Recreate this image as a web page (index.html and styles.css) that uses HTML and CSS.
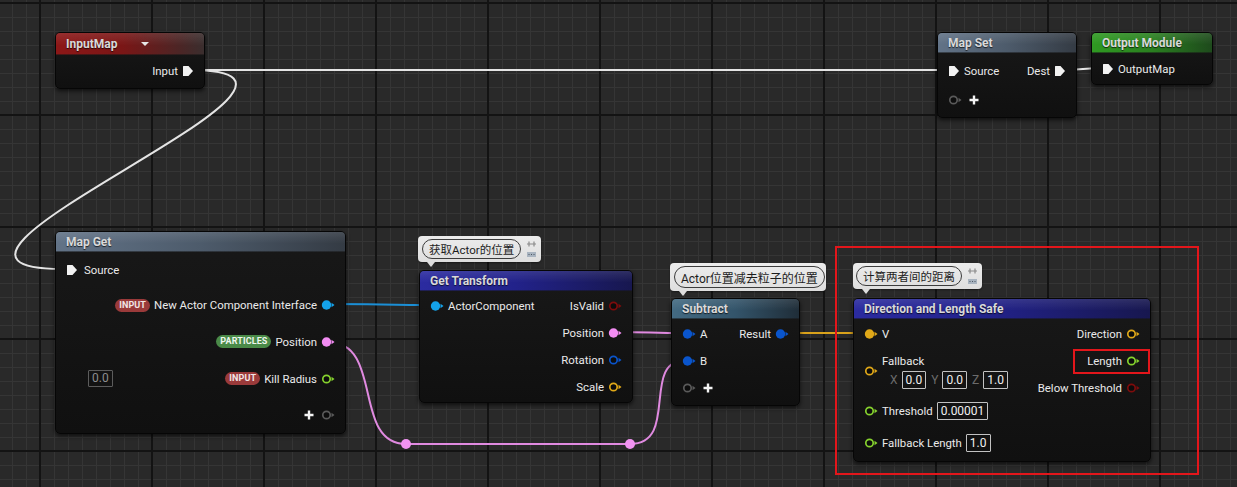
FILE: index.html
```html
<!DOCTYPE html>
<html>
<head>
<meta charset="utf-8">
<link rel="stylesheet" href="styles.css">
</head>
<body>
<div class="canvas">
  <svg class="wires" width="1237" height="487" viewBox="0 0 1237 487">
    <g fill="none" stroke-width="2" stroke-linecap="round">
      <path d="M190 70 L946 70" stroke="#e4e4e4"/>
      <path d="M190 70 C390 70 -140 269 62 269" stroke="#e4e4e4"/>
      <path d="M1062 70 C1082 70 1084 68 1104 68" stroke="#e4e4e4"/>
      <path d="M328 304 C378 304 385 305 437 305" stroke="#1b8fd6"/>
      <path d="M328 342 C384 342 352 444 406 444 L630 444 C680 444 640 360 686 360" stroke="#e08ae0"/>
      <path d="M614 332 C650 332 650 333 686 333" stroke="#e08ae0"/>
      <path d="M781 333 L871 333" stroke="#d9a21b"/>
    </g>
    <circle cx="406" cy="444" r="5" fill="#f294f2"/>
    <circle cx="630" cy="444" r="5" fill="#f294f2"/>
  </svg>

  <!-- InputMap -->
  <div class="node n-inputmap">
    <div class="hdr hdr-red tall"><span>InputMap</span><span class="caret"></span></div>
    <div class="body">
      <div class="row r h30"><span class="lbl">Input</span><svg class="exec" viewBox="0 0 12 12" width="12" height="12"><path d="M1.5 1H6.5L11 6L6.5 11H1.5Q1 11 1 10.5V1.5Q1 1 1.5 1Z" fill="#f2f2f2"/></svg></div>
    </div>
  </div>

  <!-- Map Set -->
  <div class="node n-mapset">
    <div class="hdr hdr-grey"><span>Map Set</span></div>
    <div class="body pb5">
      <div class="row sb h34">
        <div class="grp"><svg class="exec" viewBox="0 0 12 12" width="12" height="12"><path d="M1.5 1H6.5L11 6L6.5 11H1.5Q1 11 1 10.5V1.5Q1 1 1.5 1Z" fill="#f2f2f2"/></svg><span class="lbl">Source</span></div>
        <div class="grp"><span class="lbl">Dest</span><svg class="exec" viewBox="0 0 12 12" width="12" height="12"><path d="M1.5 1H6.5L11 6L6.5 11H1.5Q1 11 1 10.5V1.5Q1 1 1.5 1Z" fill="#f2f2f2"/></svg></div>
      </div>
      <div class="row h24">
        <svg class="pin c-wild" viewBox="0 0 14 12" width="14" height="12"><circle cx="5.5" cy="6" r="3.7" fill="#0c0c0c" stroke="currentColor" stroke-width="1.7"/><path d="M10.5 3.8L13.5 6L10.5 8.2Z" fill="currentColor"/></svg>
        <svg class="plus" viewBox="0 0 10 10" width="10" height="10"><path d="M5 0.5V9.5M0.5 5H9.5" stroke="#f4f4f4" stroke-width="2.4"/></svg>
      </div>
    </div>
  </div>

  <!-- Output Module -->
  <div class="node n-output">
    <div class="hdr hdr-green"><span>Output Module</span></div>
    <div class="body pb0">
      <div class="row h30"><svg class="exec" viewBox="0 0 12 12" width="12" height="12"><path d="M1.5 1H6.5L11 6L6.5 11H1.5Q1 11 1 10.5V1.5Q1 1 1.5 1Z" fill="#f2f2f2"/></svg><span class="lbl">OutputMap</span></div>
    </div>
  </div>

  <!-- Map Get -->
  <div class="node n-mapget">
    <div class="hdr hdr-grey"><span>Map Get</span></div>
    <div class="body pt0 pb0">
      <div class="row h35"><svg class="exec" viewBox="0 0 12 12" width="12" height="12"><path d="M1.5 1H6.5L11 6L6.5 11H1.5Q1 11 1 10.5V1.5Q1 1 1.5 1Z" fill="#f2f2f2"/></svg><span class="lbl ml2">Source</span></div>
      <div class="row r h36"><span class="tag tag-red">INPUT</span><span class="lbl">New Actor Component Interface</span><svg class="pin c-obj" viewBox="0 0 14 12" width="14" height="12"><circle cx="5.5" cy="6" r="4.7" fill="currentColor"/><path d="M10.5 3.8L13.5 6L10.5 8.2Z" fill="currentColor"/></svg></div>
      <div class="row r h37"><span class="tag tag-green">PARTICLES</span><span class="lbl">Position</span><svg class="pin c-pos" viewBox="0 0 14 12" width="14" height="12"><circle cx="5.5" cy="6" r="4.7" fill="currentColor"/><path d="M10.5 3.8L13.5 6L10.5 8.2Z" fill="currentColor"/></svg></div>
      <div class="row h37"><span class="val dim">0.0</span><span class="tag tag-red push">INPUT</span><span class="lbl">Kill Radius</span><svg class="pin c-float" viewBox="0 0 14 12" width="14" height="12"><circle cx="5.5" cy="6" r="3.7" fill="#0c0c0c" stroke="currentColor" stroke-width="1.7"/><path d="M10.5 3.8L13.5 6L10.5 8.2Z" fill="currentColor"/></svg></div>
      <div class="row r h36"><svg class="plus" viewBox="0 0 10 10" width="10" height="10"><path d="M5 0.5V9.5M0.5 5H9.5" stroke="#f4f4f4" stroke-width="2.4"/></svg><svg class="pin c-wild" viewBox="0 0 14 12" width="14" height="12"><circle cx="5.5" cy="6" r="3.7" fill="#0c0c0c" stroke="currentColor" stroke-width="1.7"/><path d="M10.5 3.8L13.5 6L10.5 8.2Z" fill="currentColor"/></svg></div>
    </div>
  </div>

  <!-- Get Transform -->
  <div class="cmt cm-gt">
    <div class="pill">获取Actor的位置</div>
    <div class="cicons">
      <svg width="9" height="6" viewBox="0 0 9 6"><path d="M0 3H9M2 0.5V5.5M7 0.5V5.5" stroke="#8a8a8a" stroke-width="1.2"/></svg>
      <svg width="9" height="5" viewBox="0 0 9 5"><rect width="9" height="5" fill="#a9b4c0"/><path d="M1.5 2.5H2.5M4 2.5H5M6.5 2.5H7.5" stroke="#4a5663" stroke-width="1"/></svg>
    </div>
  </div>
  <div class="node n-gettf">
    <div class="hdr hdr-blue"><span>Get Transform</span></div>
    <div class="body">
      <div class="row sb">
        <div class="grp"><svg class="pin c-obj" viewBox="0 0 14 12" width="14" height="12"><circle cx="5.5" cy="6" r="4.7" fill="currentColor"/><path d="M10.5 3.8L13.5 6L10.5 8.2Z" fill="currentColor"/></svg><span class="lbl">ActorComponent</span></div>
        <div class="grp"><span class="lbl">IsValid</span><svg class="pin c-bool" viewBox="0 0 14 12" width="14" height="12"><circle cx="5.5" cy="6" r="3.7" fill="#0c0c0c" stroke="currentColor" stroke-width="1.7"/><path d="M10.5 3.8L13.5 6L10.5 8.2Z" fill="currentColor"/></svg></div>
      </div>
      <div class="row r"><span class="lbl">Position</span><svg class="pin c-pos" viewBox="0 0 14 12" width="14" height="12"><circle cx="5.5" cy="6" r="4.7" fill="currentColor"/><path d="M10.5 3.8L13.5 6L10.5 8.2Z" fill="currentColor"/></svg></div>
      <div class="row r"><span class="lbl">Rotation</span><svg class="pin c-vec" viewBox="0 0 14 12" width="14" height="12"><circle cx="5.5" cy="6" r="3.7" fill="#0c0c0c" stroke="currentColor" stroke-width="1.7"/><path d="M10.5 3.8L13.5 6L10.5 8.2Z" fill="currentColor"/></svg></div>
      <div class="row r"><span class="lbl">Scale</span><svg class="pin c-yel" viewBox="0 0 14 12" width="14" height="12"><circle cx="5.5" cy="6" r="3.7" fill="#0c0c0c" stroke="currentColor" stroke-width="1.7"/><path d="M10.5 3.8L13.5 6L10.5 8.2Z" fill="currentColor"/></svg></div>
    </div>
  </div>

  <!-- Subtract -->
  <div class="cmt cm-sub">
    <div class="pill">Actor位置减去粒子的位置</div>
  </div>
  <div class="node n-sub">
    <div class="hdr hdr-teal"><span>Subtract</span></div>
    <div class="body pb4">
      <div class="row sb">
        <div class="grp"><svg class="pin c-vec" viewBox="0 0 14 12" width="14" height="12"><circle cx="5.5" cy="6" r="4.7" fill="currentColor"/><path d="M10.5 3.8L13.5 6L10.5 8.2Z" fill="currentColor"/></svg><span class="lbl">A</span></div>
        <div class="grp"><span class="lbl">Result</span><svg class="pin c-vec" viewBox="0 0 14 12" width="14" height="12"><circle cx="5.5" cy="6" r="4.7" fill="currentColor"/><path d="M10.5 3.8L13.5 6L10.5 8.2Z" fill="currentColor"/></svg></div>
      </div>
      <div class="row"><svg class="pin c-vec" viewBox="0 0 14 12" width="14" height="12"><circle cx="5.5" cy="6" r="4.7" fill="currentColor"/><path d="M10.5 3.8L13.5 6L10.5 8.2Z" fill="currentColor"/></svg><span class="lbl">B</span></div>
      <div class="row"><svg class="pin c-wild" viewBox="0 0 14 12" width="14" height="12"><circle cx="5.5" cy="6" r="3.7" fill="#0c0c0c" stroke="currentColor" stroke-width="1.7"/><path d="M10.5 3.8L13.5 6L10.5 8.2Z" fill="currentColor"/></svg><svg class="plus" viewBox="0 0 10 10" width="10" height="10"><path d="M5 0.5V9.5M0.5 5H9.5" stroke="#f4f4f4" stroke-width="2.4"/></svg></div>
    </div>
  </div>

  <!-- Direction and Length Safe -->
  <div class="cmt cm-dls">
    <div class="pill">计算两者间的距离</div>
    <div class="cicons">
      <svg width="9" height="6" viewBox="0 0 9 6"><path d="M0 3H9M2 0.5V5.5M7 0.5V5.5" stroke="#8a8a8a" stroke-width="1.2"/></svg>
      <svg width="9" height="5" viewBox="0 0 9 5"><rect width="9" height="5" fill="#a9b4c0"/><path d="M1.5 2.5H2.5M4 2.5H5M6.5 2.5H7.5" stroke="#4a5663" stroke-width="1"/></svg>
    </div>
  </div>
  <div class="node n-dls">
    <div class="hdr hdr-blue"><span>Direction and Length Safe</span></div>
    <div class="body cols">
      <div class="col">
        <div class="row"><svg class="pin c-yel" viewBox="0 0 14 12" width="14" height="12"><circle cx="5.5" cy="6" r="4.7" fill="currentColor"/><path d="M10.5 3.8L13.5 6L10.5 8.2Z" fill="currentColor"/></svg><span class="lbl">V</span></div>
        <div class="row h48">
          <svg class="pin c-yel" viewBox="0 0 14 12" width="14" height="12"><circle cx="5.5" cy="6" r="3.7" fill="#0c0c0c" stroke="currentColor" stroke-width="1.7"/><path d="M10.5 3.8L13.5 6L10.5 8.2Z" fill="currentColor"/></svg>
          <div class="fb">
            <span class="lbl">Fallback</span>
            <div class="xyz">
              <span class="ax">X</span><span class="val">0.0</span>
              <span class="ax">Y</span><span class="val">0.0</span>
              <span class="ax">Z</span><span class="val">1.0</span>
            </div>
          </div>
        </div>
        <div class="row h32"><svg class="pin c-float" viewBox="0 0 14 12" width="14" height="12"><circle cx="5.5" cy="6" r="3.7" fill="#0c0c0c" stroke="currentColor" stroke-width="1.7"/><path d="M10.5 3.8L13.5 6L10.5 8.2Z" fill="currentColor"/></svg><span class="lbl">Threshold</span><span class="val">0.00001</span></div>
        <div class="row h32"><svg class="pin c-float" viewBox="0 0 14 12" width="14" height="12"><circle cx="5.5" cy="6" r="3.7" fill="#0c0c0c" stroke="currentColor" stroke-width="1.7"/><path d="M10.5 3.8L13.5 6L10.5 8.2Z" fill="currentColor"/></svg><span class="lbl">Fallback Length</span><span class="val">1.0</span></div>
      </div>
      <div class="col">
        <div class="row r"><span class="lbl">Direction</span><svg class="pin c-yel" viewBox="0 0 14 12" width="14" height="12"><circle cx="5.5" cy="6" r="3.7" fill="#0c0c0c" stroke="currentColor" stroke-width="1.7"/><path d="M10.5 3.8L13.5 6L10.5 8.2Z" fill="currentColor"/></svg></div>
        <div class="row r"><span class="lbl">Length</span><svg class="pin c-float" viewBox="0 0 14 12" width="14" height="12"><circle cx="5.5" cy="6" r="3.7" fill="#0c0c0c" stroke="currentColor" stroke-width="1.7"/><path d="M10.5 3.8L13.5 6L10.5 8.2Z" fill="currentColor"/></svg></div>
        <div class="row r"><span class="lbl">Below Threshold</span><svg class="pin c-bool" viewBox="0 0 14 12" width="14" height="12"><circle cx="5.5" cy="6" r="3.7" fill="#0c0c0c" stroke="currentColor" stroke-width="1.7"/><path d="M10.5 3.8L13.5 6L10.5 8.2Z" fill="currentColor"/></svg></div>
      </div>
    </div>
  </div>

  <div class="hl hl-big"></div>
  <div class="hl hl-small"></div>
</div>
</body>
</html>
```

FILE: styles.css
```css
* { box-sizing: border-box; }

body {
  margin: 0;
  background: #272727;
  font-family: Roboto, "Noto Sans CJK SC", sans-serif;
}

.canvas {
  position: relative;
  width: 1237px;
  height: 487px;
  overflow: hidden;
  background-color: #292929;
  background-image:
    linear-gradient(to right, #131313 0 2px, transparent 2px),
    linear-gradient(to bottom, #131313 0 2px, transparent 2px),
    linear-gradient(to right, #353535 0 1px, transparent 1px),
    linear-gradient(to bottom, #353535 0 1px, transparent 1px);
  background-size: 112px 112px, 112px 112px, 14px 14px, 14px 14px;
  background-position: 39px 0, 0 2px, 40px 0, 0 3px;
}

.wires {
  position: absolute;
  left: 0;
  top: 0;
}

/* ---------- nodes ---------- */
.node {
  position: absolute;
  border-radius: 5px;
  border: 1px solid #060606;
  background: linear-gradient(#181818, #101010);
  box-shadow: 0 2px 4px rgba(0, 0, 0, 0.65);
  color: #e9e9e9;
  font-size: 11.4px;
  overflow: hidden;
}

.n-inputmap { left: 55px; top: 32px; width: 150px; }
.n-mapset   { left: 937px; top: 32px; width: 140px; }
.n-output   { left: 1091px; top: 32px; width: 122px; }
.n-mapget   { left: 55px; top: 231px; width: 291px; }
.n-gettf    { left: 419px; top: 270px; width: 214px; }
.n-sub      { left: 671px; top: 298px; width: 129px; }
.n-dls      { left: 853px; top: 298px; width: 298px; }

.hdr {
  height: 20px;
  display: flex;
  align-items: center;
  padding: 0 10px;
  font-weight: 700;
  font-size: 12px;
  color: #d9d9d9;
  text-shadow: 0 1px 1px rgba(0, 0, 0, 0.7);
  border-bottom: 1px solid rgba(0, 0, 0, 0.5);
}
.hdr.tall { height: 22px; }

.hdr-red {
  background:
    linear-gradient(rgba(255,255,255,0.10), rgba(255,255,255,0) 60%),
    linear-gradient(to right, #8c1717 0%, #7a1616 45%, #4a2626 85%, #3a2e2e 100%);
}
.hdr-grey {
  background:
    linear-gradient(rgba(255,255,255,0.10), rgba(255,255,255,0) 60%),
    linear-gradient(to right, #627387 0%, #4d5b6b 50%, #343b44 100%);
}
.hdr-green {
  background:
    linear-gradient(rgba(255,255,255,0.10), rgba(255,255,255,0) 60%),
    linear-gradient(to right, #2f9a22 0%, #2a7f20 50%, #1e4a1c 100%);
}
.hdr-blue {
  background:
    linear-gradient(rgba(255,255,255,0.10), rgba(255,255,255,0) 60%),
    linear-gradient(to right, #2b2ba0 0%, #22228a 45%, #17174f 100%);
}
.hdr-teal {
  background:
    linear-gradient(rgba(255,255,255,0.10), rgba(255,255,255,0) 60%),
    linear-gradient(to right, #436a82 0%, #33546a 50%, #1f2d38 100%);
}

.caret {
  margin-left: auto;
  margin-right: 45px;
  width: 0;
  height: 0;
  border-left: 4px solid transparent;
  border-right: 4px solid transparent;
  border-top: 4px solid #e6e6e6;
}

.body {
  padding: 1px 10px 2px;
}
.body.pb0 { padding-bottom: 0; }
.body.pt0 { padding-top: 0; }
.body.pb4 { padding-bottom: 4px; }
.body.pb5 { padding-bottom: 5px; }

.row {
  display: flex;
  align-items: center;
  gap: 4px;
  height: 27px;
}
.row.r { justify-content: flex-end; }
.row.sb { justify-content: space-between; }
.h24 { height: 24px; }
.h30 { height: 30px; }
.h32 { height: 32px; }
.h34 { height: 34px; }
.h35 { height: 35px; }
.h36 { height: 36px; }
.h37 { height: 37px; }
.h48 { height: 48px; }

.grp {
  display: flex;
  align-items: center;
  gap: 4px;
}

.lbl {
  white-space: nowrap;
  color: #eaeaea;
}
.ml2 { margin-left: 2px; }
.push { margin-left: auto; }

.pin, .exec, .plus { flex: none; display: block; }
.plus { margin: 0 3px; }

.c-obj   { color: #14a2ea; }
.c-pos   { color: #f28cf2; }
.c-vec   { color: #0a55cc; }
.c-yel   { color: #e0a818; }
.c-float { color: #86d22e; }
.c-bool  { color: #7d0c0c; }
.c-wild  { color: #5a5a5a; }

.tag {
  height: 13px;
  line-height: 13px;
  padding: 0 4px;
  border-radius: 7px;
  font-size: 9px;
  font-weight: 700;
  letter-spacing: 0.1px;
  color: #f1e6e6;
}
.tag-red { background: #9a3a3a; }
.tag-green { background: #4a8a48; color: #eef6ee; }

.val {
  border: 1px solid #c2c2c2;
  height: 18px;
  line-height: 16px;
  padding: 0 3px;
  font-size: 12px;
  color: #f0f0f0;
  border-radius: 1px;
}
.val.dim {
  margin-left: 22px;
  border-color: #5c5c5c;
  color: #8e8e8e;
  height: 17px;
  line-height: 15px;
}

.cols {
  display: flex;
  justify-content: space-between;
}
.col { display: flex; flex-direction: column; }

.fb {
  display: flex;
  flex-direction: column;
  gap: 3px;
}
.xyz {
  display: flex;
  align-items: center;
  gap: 4px;
  padding-left: 8px;
  font-size: 12px;
}
.ax { color: #6b6b6b; }
.xyz .val + .ax { margin-left: 1px; }

/* ---------- comment bubbles ---------- */
.cmt {
  position: absolute;
  display: flex;
  align-items: center;
  gap: 6px;
  padding: 3px 4px 3px 4px;
  background: linear-gradient(#ececec, #dedede);
  border-radius: 4px;
  box-shadow: 0 1px 2px rgba(0, 0, 0, 0.4);
}
.cmt::after {
  content: "";
  position: absolute;
  left: 9px;
  bottom: -5px;
  border-left: 4px solid transparent;
  border-right: 4px solid transparent;
  border-top: 5px solid #dedede;
}
.cm-gt  { left: 418px; top: 236px; }
.cm-sub { left: 670px; top: 263px; padding-right: 1px; }
.cm-dls { left: 853px; top: 263px; padding-left: 3px; }

.pill {
  height: 20px;
  display: flex;
  align-items: center;
  padding: 0 6px;
  border: 1px solid #3c3c3c;
  border-radius: 10px;
  font-size: 11.5px;
  color: #1c1c1c;
  white-space: nowrap;
}
.cm-sub .pill { height: 22px; border-radius: 11px; font-size: 12px; }

.cicons {
  display: flex;
  flex-direction: column;
  gap: 5px;
  margin-right: 1px;
}
.cicons svg { display: block; }

/* ---------- highlight rectangles ---------- */
.hl {
  position: absolute;
  border: 2px solid #e3161b;
}
.hl-big   { left: 835px; top: 246px; width: 364px; height: 229px; }
.hl-small { left: 1073px; top: 349px; width: 77px; height: 25px; }
```
